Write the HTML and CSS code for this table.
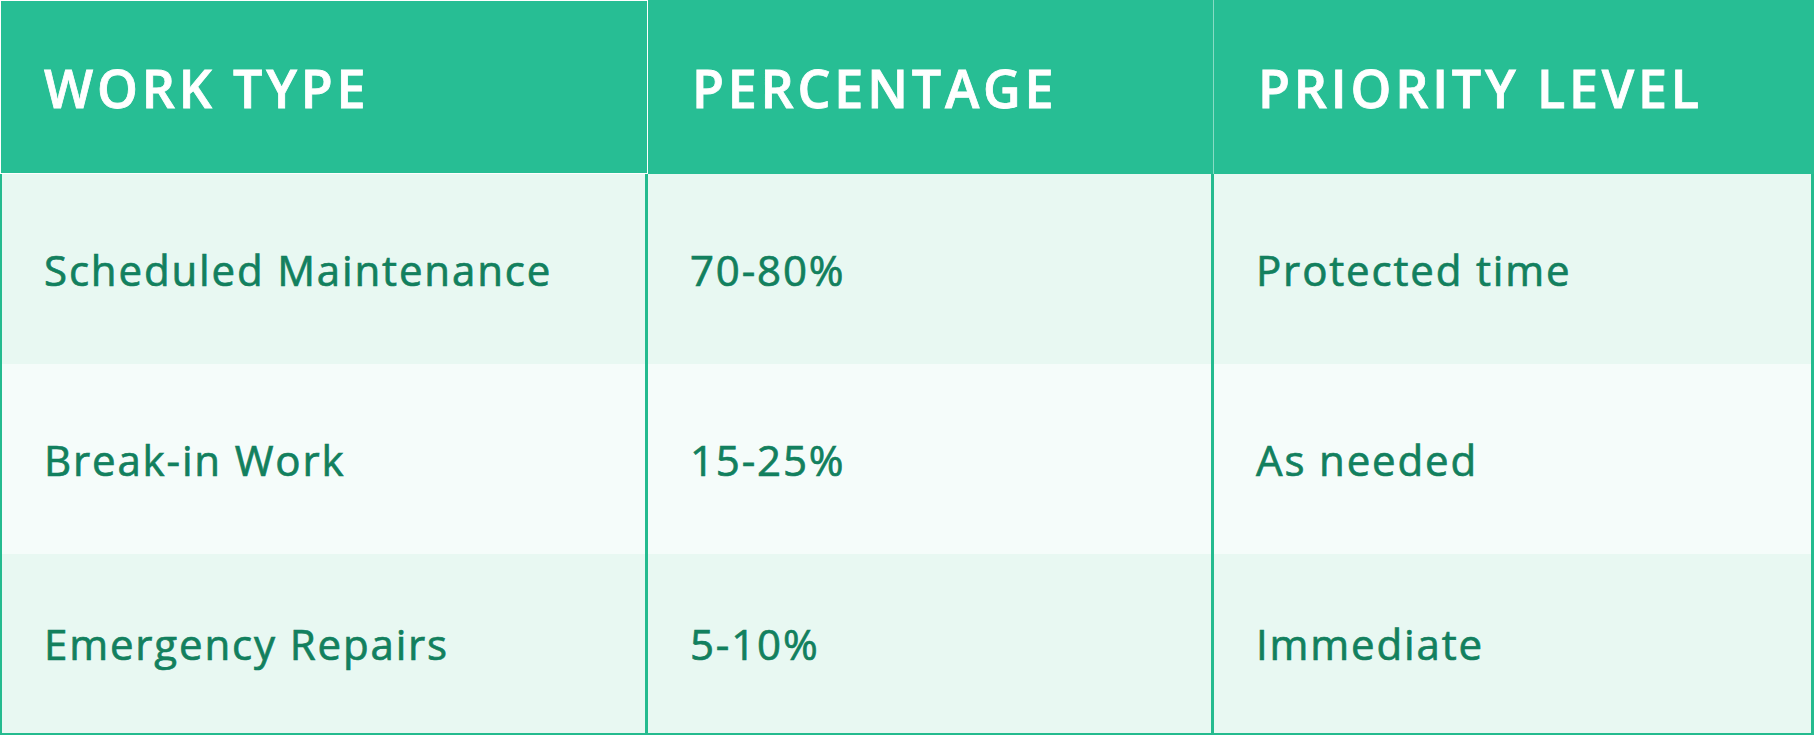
FILE: index.html
```html
<!DOCTYPE html>
<html lang="en">
<head>
<meta charset="utf-8">
<title>Work Type Allocation</title>
<link rel="stylesheet" href="styles.css">
</head>
<body>
<table class="alloc">
  <thead>
    <tr class="head-row">
      <th class="hcell hcell-first">WORK TYPE</th>
      <th class="hcell">PERCENTAGE</th>
      <th class="hcell hcell-last">PRIORITY LEVEL</th>
    </tr>
  </thead>
  <tbody>
    <tr class="row row-a">
      <td class="cell cell-first">Scheduled Maintenance</td>
      <td class="cell">70-80%</td>
      <td class="cell cell-last">Protected time</td>
    </tr>
    <tr class="row row-b">
      <td class="cell cell-first">Break-in Work</td>
      <td class="cell">15-25%</td>
      <td class="cell cell-last">As needed</td>
    </tr>
    <tr class="row row-a row-end">
      <td class="cell cell-first">Emergency Repairs</td>
      <td class="cell">5-10%</td>
      <td class="cell cell-last">Immediate</td>
    </tr>
  </tbody>
</table>
</body>
</html>
```

FILE: styles.css
```css
html, body {
  margin: 0;
  padding: 0;
  background: #ffffff;
}

.alloc {
  width: 1814px;
  border-collapse: separate;
  border-spacing: 0;
  table-layout: fixed;
  font-family: "Open Sans", "Liberation Sans", sans-serif;
}

.hcell {
  background: #27be94;
  color: #ffffff;
  height: 174px;
  box-sizing: border-box;
  text-align: left;
  vertical-align: middle;
  font-size: 52px;
  font-weight: 600;
  -webkit-text-stroke: 0.8px #ffffff;
  letter-spacing: 3.8px;
  padding: 0 0 0 44px;
  border-right: 1px solid rgba(255, 255, 255, 0.45);
}

.hcell-first {
  width: 648px;
  border: 1px solid #ffffff;
  padding-left: 43px;
}

.hcell:nth-child(2) {
  width: 566px;
}

.hcell-last {
  border-right: none;
}

.cell {
  color: #12805e;
  font-size: 42px;
  font-weight: 400;
  -webkit-text-stroke: 0.7px #12805e;
  letter-spacing: 1.85px;
  vertical-align: middle;
  padding: 0 0 0 42px;
  height: 190px;
  box-sizing: border-box;
  border-right: 3px solid #24bb8f;
}

.cell-first {
  border-left: 2px solid #24bb8f;
}

.row-a .cell {
  background: #e8f8f2;
}

.row-b .cell {
  background: #f5fcfa;
}

.row-end .cell {
  height: 181px;
  border-bottom: 2px solid #24bb8f;
}
```
